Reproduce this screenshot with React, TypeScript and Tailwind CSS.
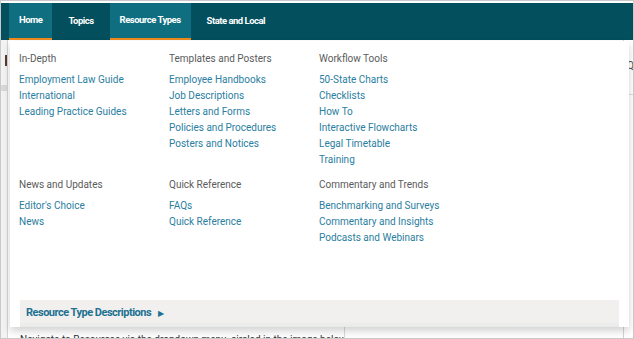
const sections = [
  { title: 'In-Depth', links: ['Employment Law Guide', 'International', 'Leading Practice Guides'] },
  {
    title: 'Templates and Posters',
    links: ['Employee Handbooks', 'Job Descriptions', 'Letters and Forms', 'Policies and Procedures', 'Posters and Notices'],
  },
  {
    title: 'Workflow Tools',
    links: ['50-State Charts', 'Checklists', 'How To', 'Interactive Flowcharts', 'Legal Timetable', 'Training'],
  },
  { title: 'News and Updates', links: ["Editor's Choice", 'News'] },
  { title: 'Quick Reference', links: ['FAQs', 'Quick Reference'] },
  { title: 'Commentary and Trends', links: ['Benchmarking and Surveys', 'Commentary and Insights', 'Podcasts and Webinars'] },
];

const tabs = [
  { label: 'Home', active: true, pad: 'px-[10px]' },
  { label: 'Topics', active: false, pad: 'px-[16px]' },
  { label: 'Resource Types', active: true, pad: 'px-[10px]' },
  { label: 'State and Local', active: false, pad: 'px-[16px]' },
];

function MenuSection({ title, links }: { title: string; links: string[] }) {
  return (
    <div>
      <div className="text-[10px] leading-4 text-[#5b5b5b] mb-[5px] whitespace-nowrap">{title}</div>
      <ul>
        {links.map((l) => (
          <li key={l} className="text-[10px] leading-4 text-[#2a7ea0] whitespace-nowrap">
            {l}
          </li>
        ))}
      </ul>
    </div>
  );
}

export default function App() {
  return (
    <div className="relative w-[634px] h-[339px] overflow-hidden bg-white border border-[#c9c9c9] font-['Roboto',sans-serif]">
      <div className="h-[2px] bg-white" />
      {/* nav bar */}
      <nav className="h-[37px] bg-[#034f5d] flex pl-[8px]">
        {tabs.map((t) => (
          <div
            key={t.label}
            className={
              t.active
                ? `${t.pad} flex items-center text-[9.5px] tracking-[-0.5px] font-bold text-white bg-[#0f6e80] border-b-2 border-[#f08a1c]`
                : `${t.pad} flex items-center text-[9.5px] tracking-[-0.5px] font-bold text-white`
            }
          >
            {t.label}
          </div>
        ))}
      </nav>

      {/* page behind the menu */}
      <div className="flex h-[308px]">
        <div className="w-[7px] bg-[#f3f3f3] border-r border-[#d4d4d4] flex flex-col">
          <div className="mt-[15px] ml-[4px] w-[2px] h-[11px] bg-[#5a3a2a]" />
          <div className="mt-[19px] h-[6px] bg-[#d9d9d9]" />
        </div>
        <div className="flex-1 flex flex-col">
          <div className="flex-1" />
          <div className="flex">
            <p className="w-[336px] pl-[12px] pt-[8px] text-[10px] leading-4 text-[#333] whitespace-nowrap overflow-hidden">
              Navigate to Resources via the dropdown menu, circled in the image below, where you will
            </p>
            <div className="flex-1 border-l border-[#d9d9d9]" />
          </div>
        </div>
        <div className="w-[10px] flex flex-col border-l border-[#d4d4d4]">
          <div className="mt-[20px] ml-[3px] text-[10px] leading-3 text-[#555]">Q</div>
          <div className="mt-[22px] border-t border-[#d9d9d9]" />
        </div>
      </div>

      {/* dropdown panel */}
      <div className="absolute top-[40px] left-[9px] w-[619px] h-[286px] bg-white shadow-[0_4px_8px_rgba(0,0,0,0.18)] flex flex-col">
        <div className="pt-[10px] px-[9px] grid grid-cols-[150px_150px_150px] gap-y-[9px]">
          {sections.map((s) => (
            <MenuSection key={s.title} title={s.title} links={s.links} />
          ))}
        </div>
        <div className="mt-auto mx-[10px] h-[27px] bg-gradient-to-b from-[#f1f0ef] from-80% to-[#e9e9e9] flex items-center px-[6px]">
          <span className="text-[11px] font-bold text-[#1d7191] tracking-[-0.5px]">Resource Type Descriptions</span>
          <span className="ml-[7px] text-[8px] text-[#1d7191]">▶</span>
        </div>
      </div>
    </div>
  );
}
